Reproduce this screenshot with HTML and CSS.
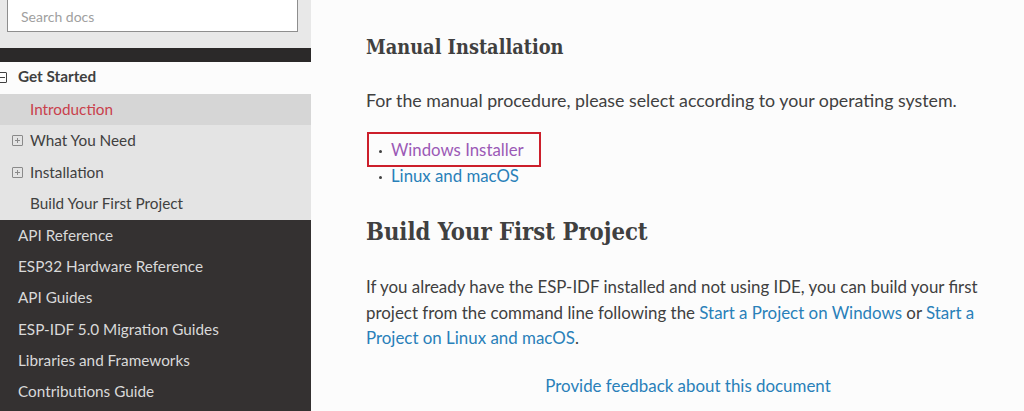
FILE: index.html
```html
<!DOCTYPE html>
<html>
<head>
<meta charset="utf-8">
<link rel="stylesheet" href="styles.css">
</head>
<body>
<div class="page">
  <aside class="sidebar">
    <div class="search-area">
      <div class="search-box">Search docs</div>
    </div>
    <div class="dark-bar"></div>
    <div class="nav-current">
      <div class="nav-top"><span class="toggle minus"></span>Get Started</div>
      <div class="nav-sub active">Introduction</div>
      <div class="nav-sub"><span class="toggle plus"></span>What You Need</div>
      <div class="nav-sub"><span class="toggle plus"></span>Installation</div>
      <div class="nav-sub">Build Your First Project</div>
    </div>
    <ul class="nav-rest">
      <li>API Reference</li>
      <li>ESP32 Hardware Reference</li>
      <li>API Guides</li>
      <li>ESP-IDF 5.0 Migration Guides</li>
      <li>Libraries and Frameworks</li>
      <li>Contributions Guide</li>
    </ul>
  </aside>
  <main class="content">
    <h2 class="h-manual">Manual Installation</h2>
    <p class="p-manual">For the manual procedure, please select according to your operating system.</p>
    <ul class="links">
      <li class="highlight"><a class="visited">Windows Installer</a></li>
      <li><a class="link">Linux and macOS</a></li>
    </ul>
    <h1 class="h-build">Build Your First Project</h1>
    <p class="p-build">If you already have the ESP-IDF installed and not using IDE, you can build your first project from the command line following the <a class="link">Start a Project on Windows</a> or <a class="link">Start a Project on Linux and macOS</a>.</p>
    <div class="feedback"><a class="link">Provide feedback about this document</a></div>
  </main>
</div>
</body>
</html>
```
FILE: styles.css
```css
html, body {
  margin: 0;
  padding: 0;
  background: #fcfcfc;
}
body {
  font-family: Lato, "Open Sans", sans-serif;
  color: #404040;
  overflow: hidden;
  height: 411px;
}
.page {
  display: flex;
  height: 411px;
}
.sidebar {
  width: 311px;
  flex: 0 0 311px;
  display: flex;
  flex-direction: column;
  background: #343131;
}
.search-area {
  background: #e8e8e8;
  height: 48px;
  padding: 0 13px 0 7px;
}
.search-box {
  height: 32px;
  box-sizing: border-box;
  border: 1px solid #8e8e8e;
  border-top: none;
  background: #fff;
  color: #a0a0a0;
  font-size: 14px;
  padding: 0 13px;
  line-height: 33px;
}
.dark-bar {
  height: 14px;
  background: #2b2929;
}
.nav-current {
  background: #e4e4e4;
}
.nav-top {
  background: #fcfcfc;
  height: 32px;
  line-height: 29px;
  font-weight: bold;
  font-size: 15.3px;
  padding-left: 18px;
  position: relative;
  color: #404040;
}
.nav-sub {
  height: 31.3px;
  line-height: 31px;
  font-size: 15.3px;
  padding-left: 30px;
  position: relative;
  color: #404040;
}
.nav-sub:last-child {
  height: 32px;
}
.nav-sub.active {
  background: #d6d6d6;
  color: #c9404c;
}
.toggle {
  position: absolute;
  top: 10px;
  width: 9px;
  height: 9px;
  border: 1px solid #8a8a8a;
  border-radius: 1px;
  box-sizing: content-box;
}
.toggle::before {
  content: "";
  position: absolute;
  left: 2px;
  right: 2px;
  top: 4px;
  height: 1px;
  background: #8a8a8a;
}
.toggle.plus {
  left: 12px;
}
.toggle.plus::after {
  content: "";
  position: absolute;
  top: 2px;
  bottom: 2px;
  left: 4px;
  width: 1px;
  background: #8a8a8a;
}
.toggle.minus {
  left: -4px;
  top: 10px;
  border-color: #404040;
}
.toggle.minus::before {
  background: #404040;
  left: 1px;
  right: 1px;
}
.nav-rest {
  list-style: none;
  margin: 0;
  padding: 0;
  background: #343131;
  flex: 1;
}
.nav-rest li {
  height: 31.3px;
  line-height: 30px;
  padding-left: 18px;
  font-size: 15.3px;
  color: #d9d9d9;
}
.content {
  flex: 1;
  padding-left: 55px;
  padding-right: 14px;
}
.h-manual {
  font-family: "DejaVu Serif Condensed", "DejaVu Serif", serif;
  font-weight: bold;
  font-size: 19.8px;
  margin: 34px 0 0 0;
  line-height: 26px;
  color: #404040;
}
.p-manual {
  font-size: 17.8px;
  line-height: 25px;
  margin: 28px 0 0 0;
}
.links {
  margin: 24px 0 0 0;
  padding: 0 0 0 25px;
  font-size: 16.8px;
  line-height: 26px;
  list-style: none;
}
.links li {
  position: relative;
}
.links li::before {
  content: "";
  position: absolute;
  left: -12px;
  top: 13px;
  width: 3px;
  height: 3px;
  border-radius: 50%;
  background: #404040;
}
.highlight {
  display: inline-block;
  padding-right: 17px;
}
.highlight::after {
  content: "";
  position: absolute;
  left: -24px;
  top: -5px;
  right: 0;
  bottom: -4px;
  border: 2px solid #cc1f2b;
}
.visited {
  color: #9b59b6;
}
.link {
  color: #2980b9;
}
.h-build {
  font-family: "DejaVu Serif Condensed", "DejaVu Serif", serif;
  font-weight: bold;
  font-size: 23.6px;
  line-height: 30px;
  margin: 28px 0 0 0;
  color: #404040;
}
.p-build {
  font-size: 16.9px;
  line-height: 25.5px;
  margin: 27px 0 0 0;
  max-width: 625px;
}
.feedback {
  font-size: 16.9px;
  margin-top: 24px;
  text-align: center;
}
```
